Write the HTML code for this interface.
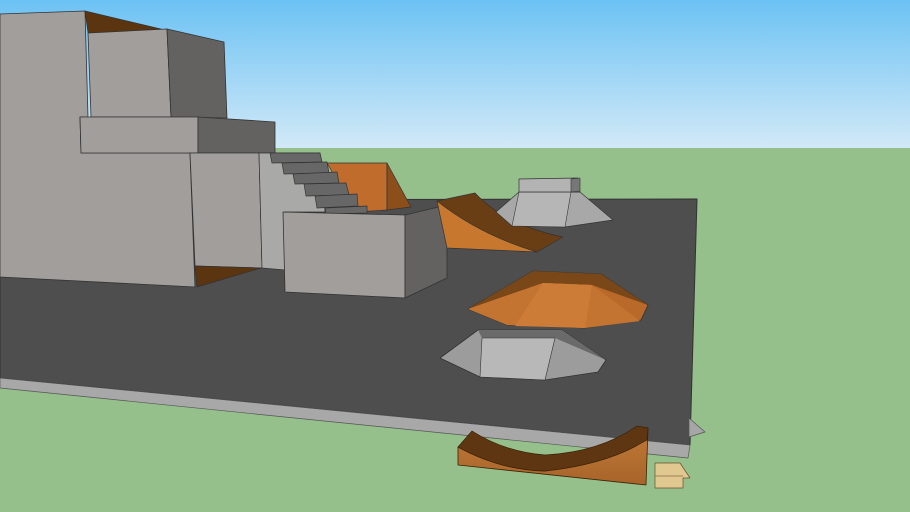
<!DOCTYPE html>
<html><head><meta charset="utf-8"><style>html,body{margin:0;padding:0;width:910px;height:512px;overflow:hidden}</style></head>
<body>
<svg width="910" height="512" viewBox="0 0 910 512" xmlns="http://www.w3.org/2000/svg" stroke-linejoin="round">
<defs>
<linearGradient id="sky" x1="0" y1="0" x2="0" y2="1"><stop offset="0" stop-color="#6cc2f4"/><stop offset="1" stop-color="#d2e9f7"/></linearGradient>
<linearGradient id="wood" x1="0" y1="0" x2="0" y2="1"><stop offset="0" stop-color="#c07a38"/><stop offset="1" stop-color="#a8642a"/></linearGradient>
</defs>
<rect width="910" height="148" fill="url(#sky)"/>
<rect y="148" width="910" height="364" fill="#95bf8b"/>
<!-- platform -->
<polygon points="0,200 697,199 690,445 0,378" fill="#4f4e4e" stroke="#333" stroke-width="1"/>
<polygon points="0,378 690,445 688,458 0,388" fill="#a9a8a8" stroke="#555" stroke-width="0.7"/>
<polygon points="689,418 705,432 689,437" fill="#a6a6a6" stroke="#555" stroke-width="0.7"/>
<!-- orange ramp behind stairs -->
<polygon points="327,163 387,163 387,210 355,212" fill="#c06c2c" stroke="#333" stroke-width="0.7"/>
<polygon points="387,163 411,207 387,210" fill="#8c4f1c" stroke="#333" stroke-width="0.7"/>
<!-- building -->
<polygon points="0,14 85,11 88,117 80,117 81,153 190,153 195,287 0,277" fill="#a19e9b" stroke="#333" stroke-width="0.8"/>
<polygon points="85,11 165,30 88,33" fill="#5b3510" stroke="#333" stroke-width="0.7"/>
<polygon points="88,33 167,29 171,117 91,117" fill="#a19e9b" stroke="#333" stroke-width="0.8"/>
<polygon points="167,29 224,42 227,118 171,117" fill="#636261" stroke="#333" stroke-width="0.8"/>
<polygon points="80,117 198,117 198,153 81,153" fill="#a19e9b" stroke="#333" stroke-width="0.8"/>
<polygon points="198,117 275,122 275,153 198,153" fill="#636261" stroke="#333" stroke-width="0.8"/>
<polygon points="190,153 259,153 262,268 195,266" fill="#a19e9b" stroke="#333" stroke-width="0.8"/>
<polygon points="195,266 261,268 197,287" fill="#5b3510" stroke="#333" stroke-width="0.7"/>
<polygon points="259,153 320,153 325,212 285,212 285,270 262,268" fill="#a9a9a7" stroke="#333" stroke-width="0.7"/>
<g fill="#676767" stroke="#333" stroke-width="0.7">
<polygon points="270,153 320,153 322,162 272,163"/>
<polygon points="282,163 327,162 329,173 284,174"/>
<polygon points="293,174 337,172 339,183 295,184"/>
<polygon points="304,184 346,183 349,195 306,196"/>
<polygon points="315,196 357,194 358,206 317,208"/>
<polygon points="325,208 367,206 367,213 326,214"/>
</g>
<polygon points="283,212 405,215 405,298 285,292" fill="#a19e9b" stroke="#333" stroke-width="0.8"/>
<polygon points="405,215 447,205 447,278 405,298" fill="#636261" stroke="#333" stroke-width="0.8"/>
<!-- quarter pipe middle -->
<path d="M437,201 L447,248 L537,252 Q490,230 437,201 Z" fill="#c8782e" stroke="#333" stroke-width="0.7"/>
<path d="M437,201 L475,193 Q505,225 563,237 L537,252 Q480,235 437,201 Z" fill="#6a3e14" stroke="#333" stroke-width="0.7"/>
<!-- gray funbox top -->
<polygon points="496,212 519,192 580,192 613,220 565,227 512,226" fill="#a8a8a8" stroke="#333" stroke-width="0.7"/>
<polygon points="519,192 571,192 565,227 512,226" fill="#b6b6b6" stroke="#333" stroke-width="0.6"/>
<polygon points="519,179 578,178 580,192 519,192" fill="#b3b3b3" stroke="#333" stroke-width="0.7"/>
<polygon points="571,179 580,178 580,191 571,192" fill="#777" stroke="#333" stroke-width="0.6"/>
<!-- orange hexagon -->
<polygon points="468,309 533,271 601,274 648,305 641,320 585,328 507,325" fill="#b96a2a" stroke="#333" stroke-width="0.8"/>
<polygon points="533,271 601,274 648,305 592,285 543,283 468,309" fill="#7a4718"/>
<polygon points="543,283 592,285 640,321 585,328 507,325 468,309" fill="#c37430"/>
<polygon points="543,283 592,285 585,328 515,326" fill="#cc7c36"/>
<!-- gray hexagon -->
<polygon points="440,358 478,330 562,330 606,360 598,372 545,380 480,377" fill="#9c9c9c" stroke="#333" stroke-width="0.8"/>
<polygon points="478,330 562,330 606,360 555,338 482,338" fill="#6a6a6a"/>
<polygon points="482,338 555,338 545,380 480,377" fill="#b8b8b8" stroke="#333" stroke-width="0.6"/>
<!-- wooden ramp -->
<path d="M458,447 Q500,470 545,471 Q600,465 636,446 L640,427 L648,428 L646,485 L458,465 Z" fill="url(#wood)" stroke="#3a2208" stroke-width="0.8"/>
<path d="M458,447 L472,431 Q505,452 545,455 Q600,452 637,426 L648,428 L647,440 L636,446 Q600,465 545,471 Q500,470 458,447 Z" fill="#5e3712" stroke="#3a2208" stroke-width="0.7"/>
<!-- small box -->
<polygon points="655,463 680,463 690,478 683,478 683,488 655,488" fill="#e0c890" stroke="#6a5030" stroke-width="0.7"/>
<line x1="655" y1="476" x2="683" y2="476" stroke="#8a6a40" stroke-width="0.7"/>
</svg>
</body></html>
